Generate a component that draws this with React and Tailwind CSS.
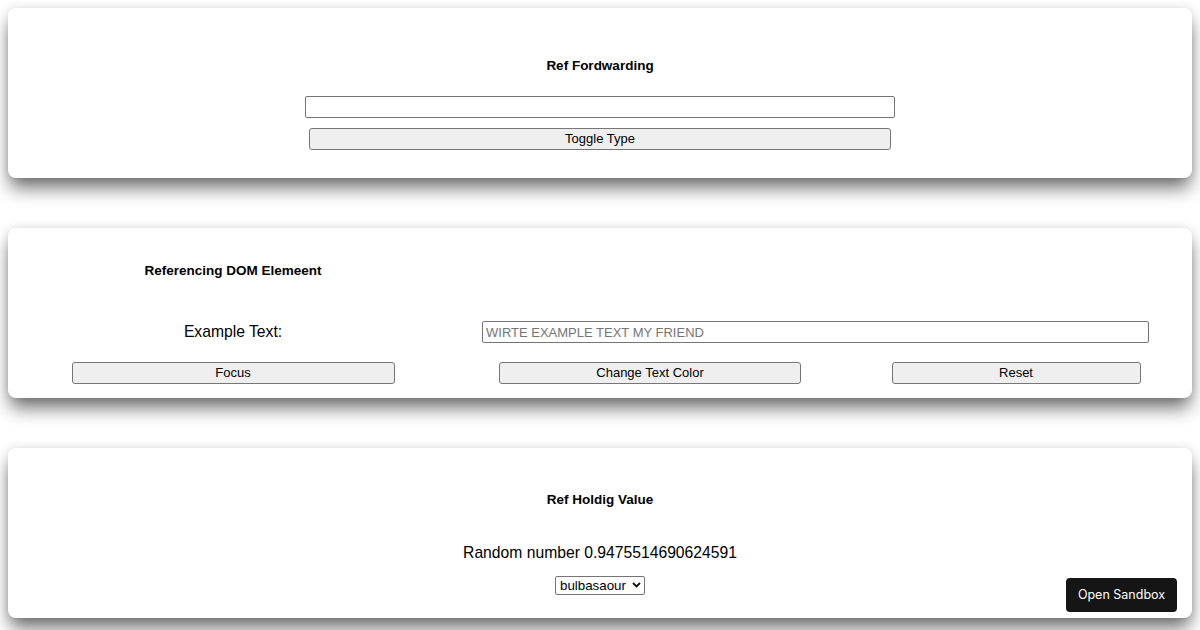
export default function App() {
  const card =
    "bg-white rounded-[8px] shadow-[0_12px_18px_-2px_rgba(0,0,0,0.55),0_0_10px_rgba(0,0,0,0.12)] h-[170px]";
  const btn =
    "h-[22px] bg-[#efefef] border border-[#767676] rounded-[3px] text-[13px] text-black leading-none pb-[2px]";
  return (
    <div className="w-[1200px] h-[630px] bg-white relative overflow-hidden font-['Liberation_Sans',Arial,sans-serif] text-black">
      <div className="flex flex-col gap-[50px] px-[8px] pt-[8px]">
        {/* Card 1 */}
        <div className={card + " flex flex-col items-center pt-[49px]"}>
          <h3 className="text-[13.5px] font-bold leading-[16px] mt-[1px]">Ref Fordwarding</h3>
          <input
            className="mt-[22px] w-[590px] h-[22px] border border-[#767676] rounded-[2px] px-[2px] text-[13px]"
            type="text"
          />
          <button className={btn + " mt-[10px] w-[582px]"}>Toggle Type</button>
        </div>

        {/* Card 2 */}
        <div className={card + " pt-[35px] grid grid-cols-[450px_384px_1fr] grid-rows-[16px_64px_22px] content-start"}>
          <h3 className="text-[13.5px] font-bold leading-[16px] text-center col-start-1">
            Referencing DOM Elemeent
          </h3>
          <div className="col-start-1 row-start-2 flex items-end justify-center pb-[2px]">
            <span className="text-[15.7px] leading-[18px]">Example Text:</span>
          </div>
          <div className="col-start-2 col-span-2 row-start-2 flex items-end pl-[24px] pr-[43px]">
            <input
              className="w-full h-[22px] border border-[#767676] rounded-[2px] px-[3px] text-[13px] placeholder:text-[#757575]"
              placeholder="WIRTE EXAMPLE TEXT MY FRIEND"
              type="text"
            />
          </div>
          <div className="row-start-3 col-start-1 flex justify-center mt-[19px]">
            <button className={btn + " w-[323px]"}>Focus</button>
          </div>
          <div className="row-start-3 col-start-2 flex justify-center mt-[19px]">
            <button className={btn + " w-[302px]"}>Change Text Color</button>
          </div>
          <div className="row-start-3 col-start-3 flex justify-center mt-[19px] pr-[2px]">
            <button className={btn + " w-[249px]"}>Reset</button>
          </div>
        </div>

        {/* Card 3 */}
        <div className={card + " flex flex-col items-center pt-[44px]"}>
          <h3 className="text-[13.5px] font-bold leading-[16px]">Ref Holdig Value</h3>
          <p className="mt-[36px] text-[15.7px] leading-[18px]">Random number 0.9475514690624591</p>
          <div className="relative mt-[14px] w-[90px] h-[19px]">
            <select className="block w-full h-[19px] border border-[#767676] rounded-[2px] text-[13.33px] leading-[15px] bg-white pl-[4px] pr-[16px] pt-0 pb-[1px] appearance-none">
              <option>bulbasaour</option>
            </select>
            <svg
              className="absolute right-[4px] top-[6px] pointer-events-none"
              width="9"
              height="6"
              viewBox="0 0 9 6"
              fill="none"
            >
              <path d="M1 1L4.5 4.5L8 1" stroke="#111" strokeWidth="1.8" />
            </svg>
          </div>
        </div>
      </div>

      <button className="absolute left-[1066px] top-[578px] w-[111px] h-[34px] bg-[#151515] rounded-[4px] text-white text-[12.5px] font-['Inter',sans-serif]">
        Open Sandbox
      </button>
    </div>
  );
}
